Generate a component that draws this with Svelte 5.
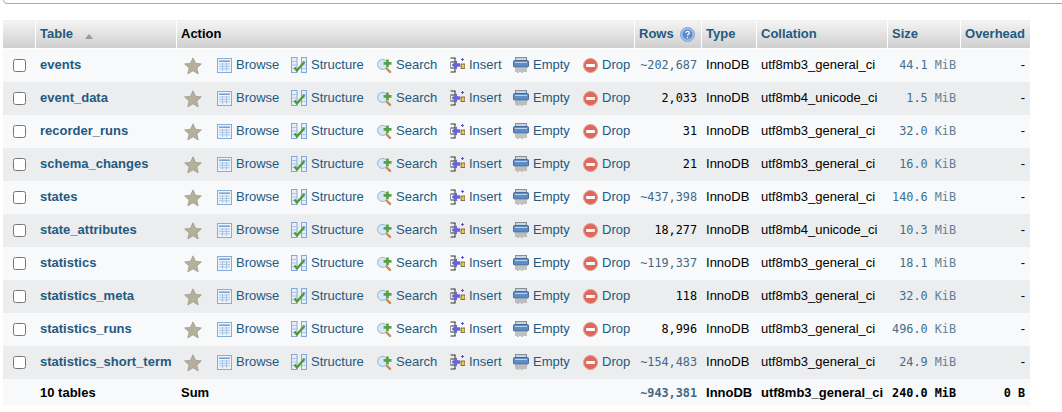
<script>
  const rows = [
    { name: 'events', count: '~202,687', approx: true, collation: 'utf8mb3_general_ci', size: '44.1', unit: 'MiB' },
    { name: 'event_data', count: '2,033', collation: 'utf8mb4_unicode_ci', size: '1.5', unit: 'MiB' },
    { name: 'recorder_runs', count: '31', collation: 'utf8mb3_general_ci', size: '32.0', unit: 'KiB' },
    { name: 'schema_changes', count: '21', collation: 'utf8mb3_general_ci', size: '16.0', unit: 'KiB' },
    { name: 'states', count: '~437,398', approx: true, collation: 'utf8mb3_general_ci', size: '140.6', unit: 'MiB' },
    { name: 'state_attributes', count: '18,277', collation: 'utf8mb4_unicode_ci', size: '10.3', unit: 'MiB' },
    { name: 'statistics', count: '~119,337', approx: true, collation: 'utf8mb3_general_ci', size: '18.1', unit: 'MiB' },
    { name: 'statistics_meta', count: '118', collation: 'utf8mb3_general_ci', size: '32.0', unit: 'KiB' },
    { name: 'statistics_runs', count: '8,996', collation: 'utf8mb3_general_ci', size: '496.0', unit: 'KiB' },
    { name: 'statistics_short_term', count: '~154,483', approx: true, collation: 'utf8mb3_general_ci', size: '24.9', unit: 'MiB' }
  ];
</script>

{#snippet star()}
  <svg class="ic star" width="18" height="18" viewBox="0 0 18 18">
    <path d="M9 .8l2.5 5.5 5.9.6-4.5 4 1.3 6L9 13.8l-5.2 3.1 1.3-6-4.5-4 5.9-.6z" fill="#b5af9c" stroke="#9a9584" stroke-width=".7" />
  </svg>
{/snippet}

{#snippet browse()}
  <svg class="ic" width="15" height="15" viewBox="0 0 15 15">
    <rect x=".5" y=".5" width="14" height="14" fill="#eef4fb" stroke="#86abdc" />
    <path d="M2 3.2h11" stroke="#7aa2d6" stroke-width="1.6" />
    <path d="M2 6h11M2 8.4h11M2 10.8h11M5.5 5v8M9.5 5v8" stroke="#a3c0e4" stroke-width=".9" />
  </svg>
{/snippet}

{#snippet structure()}
  <svg class="ic" width="16" height="16" viewBox="0 0 16 16">
    <rect x=".5" y=".5" width="5.5" height="15" fill="#e6eefa" stroke="#84a7da" />
    <rect x="10.5" y=".5" width="5" height="15" fill="#e6eefa" stroke="#84a7da" />
    <path d="M1 4.5h4.5M1 8h4.5M1 11.5h4.5M11 4.5h4M11 8h4M11 11.5h4" stroke="#a3c0e4" stroke-width=".9" />
    <path d="M3.5 10.5l2.5 3 7.5-8.5" fill="none" stroke="#4d9a3a" stroke-width="2.4" />
  </svg>
{/snippet}

{#snippet search()}
  <svg class="ic" width="15" height="15" viewBox="0 0 15 15">
    <path d="M8.5 9.5l4.5 4.3" stroke="#c78b52" stroke-width="2.4" stroke-linecap="round" />
    <circle cx="5.6" cy="6.4" r="5" fill="#d7e7f6" stroke="#93b3d2" />
    <path d="M9.2 1.5h2.6v2.6h2.7v2.6h-2.7v2.6H9.2V6.7H6.6V4.1h2.6z" fill="#56a044" />
  </svg>
{/snippet}

{#snippet insert()}
  <svg class="ic" width="15" height="16" viewBox="0 0 15 16">
    <path d="M.5 1h5M5 1v4M.5 5h5M.5 11h5M5 11v4M.5 15h5" fill="none" stroke="#333" />
    <path d="M.5 5v6" stroke="#999" />
    <path d="M1.5 8L7 3.5v2.8h3v3.4H7v2.8z" fill="#6a64d6" />
    <rect x="11" y="7" width="4" height="4.5" fill="#f0c83c" stroke="#444" stroke-width=".7" />
    <path d="M12.5 1v3M11 2.5h3" stroke="#5a55c8" />
  </svg>
{/snippet}

{#snippet empty()}
  <svg class="ic" width="16" height="16" viewBox="0 0 16 16">
    <rect x="2.5" y=".5" width="11" height="3" fill="#ccd3da" stroke="#848f9a" />
    <rect x=".5" y="3.5" width="15" height="6.5" rx="1" fill="#5f8cc5" stroke="#456d9e" />
    <path d="M2 5.5h12" stroke="#bcd3ec" />
    <path d="M3 10.5v4.5M5 10.5v5.5M7 10.5v4.5M9 10.5v5.5M11 10.5v4.5M13 10.5v4.5" stroke="#96968d" stroke-width="1.1" />
  </svg>
{/snippet}

{#snippet drop()}
  <svg class="ic" width="15" height="15" viewBox="0 0 15 15">
    <circle cx="7.5" cy="7.5" r="7" fill="#e2675a" stroke="#dba38b" />
    <rect x="3.2" y="6" width="8.6" height="3" fill="#fff" />
  </svg>
{/snippet}

<div class="page">
  <div class="topbox"></div>
  <table>
    <colgroup>
      <col style="width:33px" />
      <col style="width:141px" />
      <col style="width:35px" />
      <col style="width:74px" />
      <col style="width:86px" />
      <col style="width:73px" />
      <col style="width:63px" />
      <col style="width:70px" />
      <col style="width:57px" />
      <col style="width:67px" />
      <col style="width:55px" />
      <col style="width:131px" />
      <col style="width:73px" />
      <col style="width:69px" />
    </colgroup>
    <thead>
      <tr>
        <th></th>
        <th class="link">Table <span class="sort"></span></th>
        <th colspan="7" class="plain">Action</th>
        <th class="link">Rows
          <svg class="help" width="15" height="15" viewBox="0 0 15 15">
            <circle cx="7.5" cy="7.5" r="7" fill="#a5c2e8" stroke="#7ea3d6" />
            <circle cx="7.5" cy="7.5" r="5" fill="#5c89cb" />
            <path d="M5.8 6c.2-2.1 3.5-2.1 3.5 0 0 1.3-1.8 1.3-1.8 2.6" fill="none" stroke="#fff" stroke-width="1.2" />
            <circle cx="7.5" cy="10.6" r=".8" fill="#fff" />
          </svg>
        </th>
        <th class="link">Type</th>
        <th class="link">Collation</th>
        <th class="link">Size</th>
        <th class="link">Overhead</th>
      </tr>
    </thead>
    <tbody>
      {#each rows as row}
        <tr>
          <td class="check"><input type="checkbox" /></td>
          <td class="name"><a href="#top">{row.name}</a></td>
          <td class="fav">{@render star()}</td>
          <td class="act"><a href="#top">{@render browse()}Browse</a></td>
          <td class="act"><a href="#top">{@render structure()}Structure</a></td>
          <td class="act"><a href="#top">{@render search()}Search</a></td>
          <td class="act"><a href="#top">{@render insert()}Insert</a></td>
          <td class="act"><a href="#top">{@render empty()}Empty</a></td>
          <td class="act"><a href="#top">{@render drop()}Drop</a></td>
          <td class="num" class:approx={row.approx}>{row.count}</td>
          <td>InnoDB</td>
          <td>{row.collation}</td>
          <td class="num size">{row.size} <span class="unit">{row.unit}</span></td>
          <td class="dash">-</td>
        </tr>
      {/each}
    </tbody>
    <tfoot>
      <tr>
        <th></th>
        <th>10 tables</th>
        <th colspan="7">Sum</th>
        <th class="num approx">~943,381</th>
        <th>InnoDB</th>
        <th>utf8mb3_general_ci</th>
        <th class="num">240.0 MiB</th>
        <th class="num">0 B</th>
      </tr>
    </tfoot>
  </table>
</div>

<style>
  :global(body) {
    margin: 0;
    background: #fff;
  }

  .page {
    padding: 20px 0 0 3px;
    height: 392px;
    width: 1059px;
    position: relative;
    overflow: hidden;
    font-family: "Liberation Sans", Arial, sans-serif;
    font-size: 13px;
    color: #000;
  }

  .topbox {
    position: absolute;
    left: 3px;
    right: -10px;
    top: -12px;
    height: 14px;
    border: 1px solid #aaa;
    border-radius: 4px;
  }

  table {
    border-collapse: separate;
    border-spacing: 0;
    table-layout: fixed;
    width: 1027px;
  }

  thead th {
    height: 29px;
    padding: 0 4px 2px;
    box-sizing: border-box;
    text-align: left;
    background: linear-gradient(#f4f4f4, #cfcfcf);
    border-top: 1px solid #eee;
    border-right: 1px solid #fff;
    border-bottom: 1px solid #fff;
    font-weight: bold;
    white-space: nowrap;
    vertical-align: middle;
  }

  thead th:last-child {
    border-right: 0;
  }

  .link {
    color: #235a81;
  }

  .plain {
    color: #000;
  }

  .sort {
    display: inline-block;
    margin-left: 8px;
    width: 0;
    height: 0;
    border-left: 4px solid transparent;
    border-right: 4px solid transparent;
    border-bottom: 5px solid #999;
    vertical-align: -1px;
  }

  .help {
    vertical-align: -4px;
    margin-left: 3px;
  }

  tbody tr:nth-child(odd) {
    background: #f7f9fb;
  }

  tbody tr:nth-child(even) {
    background: #ebedef;
  }

  td {
    height: 33px;
    padding: 0 4px 2px;
    box-sizing: border-box;
    white-space: nowrap;
    vertical-align: middle;
  }

  a {
    color: #235a81;
    text-decoration: none;
  }

  .check {
    padding: 0 0 0 10px;
  }

  .check input {
    width: 13px;
    height: 13px;
    margin: 0;
    display: block;
  }

  .name {
    font-weight: bold;
  }

  .fav {
    padding: 0 0 0 7px;
  }

  .act a {
    display: flex;
    align-items: center;
    gap: 4px;
  }

  .act {
    padding: 0 0 2px 5px;
  }

  .ic {
    flex-shrink: 0;
    margin-top: 1px;
    display: block;
  }

  .star {
    margin-top: 0;
  }

  .num {
    font-family: "DejaVu Sans Mono", monospace;
    font-size: 11.8px;
    text-align: right;
    padding-right: 5px;
  }

  .approx {
    color: #3f6a86;
  }

  .size {
    color: #3f6f8e;
  }

  .unit {
    color: #5f8298;
  }

  .dash {
    text-align: right;
    padding-right: 5px;
  }

  tfoot th {
    height: 27px;
    padding: 0 4px;
    box-sizing: border-box;
    background: #f7f9fb;
    text-align: left;
    font-weight: bold;
    white-space: nowrap;
  }

  tfoot th.num {
    text-align: right;
    padding-right: 5px;
  }

  tfoot th.approx {
    color: #3f6a86;
  }
</style>
